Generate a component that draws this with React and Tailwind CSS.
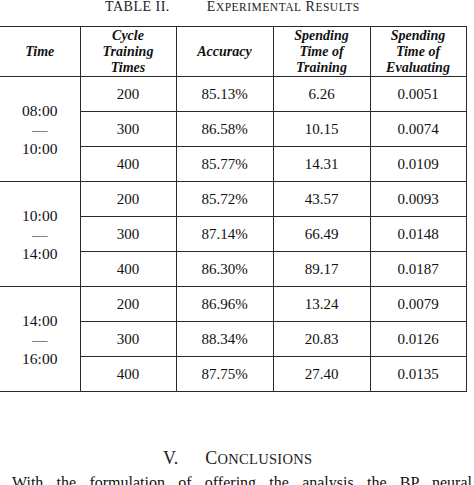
import React from "react";

const groups = [
  {
    time: ["08:00", "10:00"],
    rows: [
      ["200", "85.13%", "6.26", "0.0051"],
      ["300", "86.58%", "10.15", "0.0074"],
      ["400", "85.77%", "14.31", "0.0109"],
    ],
  },
  {
    time: ["10:00", "14:00"],
    rows: [
      ["200", "85.72%", "43.57", "0.0093"],
      ["300", "87.14%", "66.49", "0.0148"],
      ["400", "86.30%", "89.17", "0.0187"],
    ],
  },
  {
    time: ["14:00", "16:00"],
    rows: [
      ["200", "86.96%", "13.24", "0.0079"],
      ["300", "88.34%", "20.83", "0.0126"],
      ["400", "87.75%", "27.40", "0.0135"],
    ],
  },
];

const serif = { fontFamily: '"Liberation Serif", "Times New Roman", serif' };

export default function App() {
  return (
    <div
      className="w-[474px] h-[485px] bg-white text-[#111] overflow-hidden"
      style={serif}
    >
      <div className="h-[26px] flex items-start pl-[105px] gap-[37px] text-[14px] leading-[14px] tracking-[0.5px] text-[#222]">
        <span>TABLE II.</span>
        <span>
          E<span className="text-[11.5px]">XPERIMENTAL</span> R
          <span className="text-[11.5px]">ESULTS</span>
        </span>
      </div>
      <table className="table-fixed border-collapse w-[466px]">
        <colgroup>
          <col className="w-[80px]" />
          <col className="w-[96px]" />
          <col className="w-[97px]" />
          <col className="w-[97px]" />
          <col className="w-[96px]" />
        </colgroup>
        <thead>
          <tr className="h-[50px] text-[14px] leading-[16px] font-bold italic">
            <th className="border-t border-b border-r border-[#2a2a2a] border-l-0 font-bold">Time</th>
            <th className="border border-[#2a2a2a] font-bold">
              Cycle
              <br />
              Training
              <br />
              Times
            </th>
            <th className="border border-[#2a2a2a] font-bold">Accuracy</th>
            <th className="border border-[#2a2a2a] font-bold">
              Spending
              <br />
              Time of
              <br />
              Training
            </th>
            <th className="border border-[#2a2a2a] font-bold">
              Spending
              <br />
              Time of
              <br />
              Evaluating
            </th>
          </tr>
        </thead>
        <tbody>
          {groups.map((g, gi) =>
            g.rows.map((r, ri) => (
              <tr key={gi + "-" + ri} className="h-[35px] text-[15px] leading-[16px]">
                {ri === 0 && (
                  <td
                    rowSpan={3}
                    className="border-t border-b border-r border-[#2a2a2a] border-l-0 text-center text-[15.5px] leading-[19px]"
                  >
                    <div>{g.time[0]}</div>
                    <div>—</div>
                    <div>{g.time[1]}</div>
                  </td>
                )}
                {r.map((c, ci) => (
                  <td key={ci} className="border border-[#2a2a2a] text-center">
                    {c}
                  </td>
                ))}
              </tr>
            ))
          )}
        </tbody>
      </table>
      <div className="h-[57px]" />
      <div className="flex items-baseline pl-[163px] gap-[27px] text-[18px] leading-[18px] text-[#222]">
        <span>V.</span>
        <span className="tracking-[0.3px]">
          C<span className="text-[14.5px]">ONCLUSIONS</span>
        </span>
      </div>
      <div className="mt-[6px] pl-[12px] w-[474px] text-[16px] leading-[18px]">
        <div className="w-[460px] text-justify [text-align-last:justify]">
          With the formulation of offering the analysis the BP neural
        </div>
      </div>
    </div>
  );
}
